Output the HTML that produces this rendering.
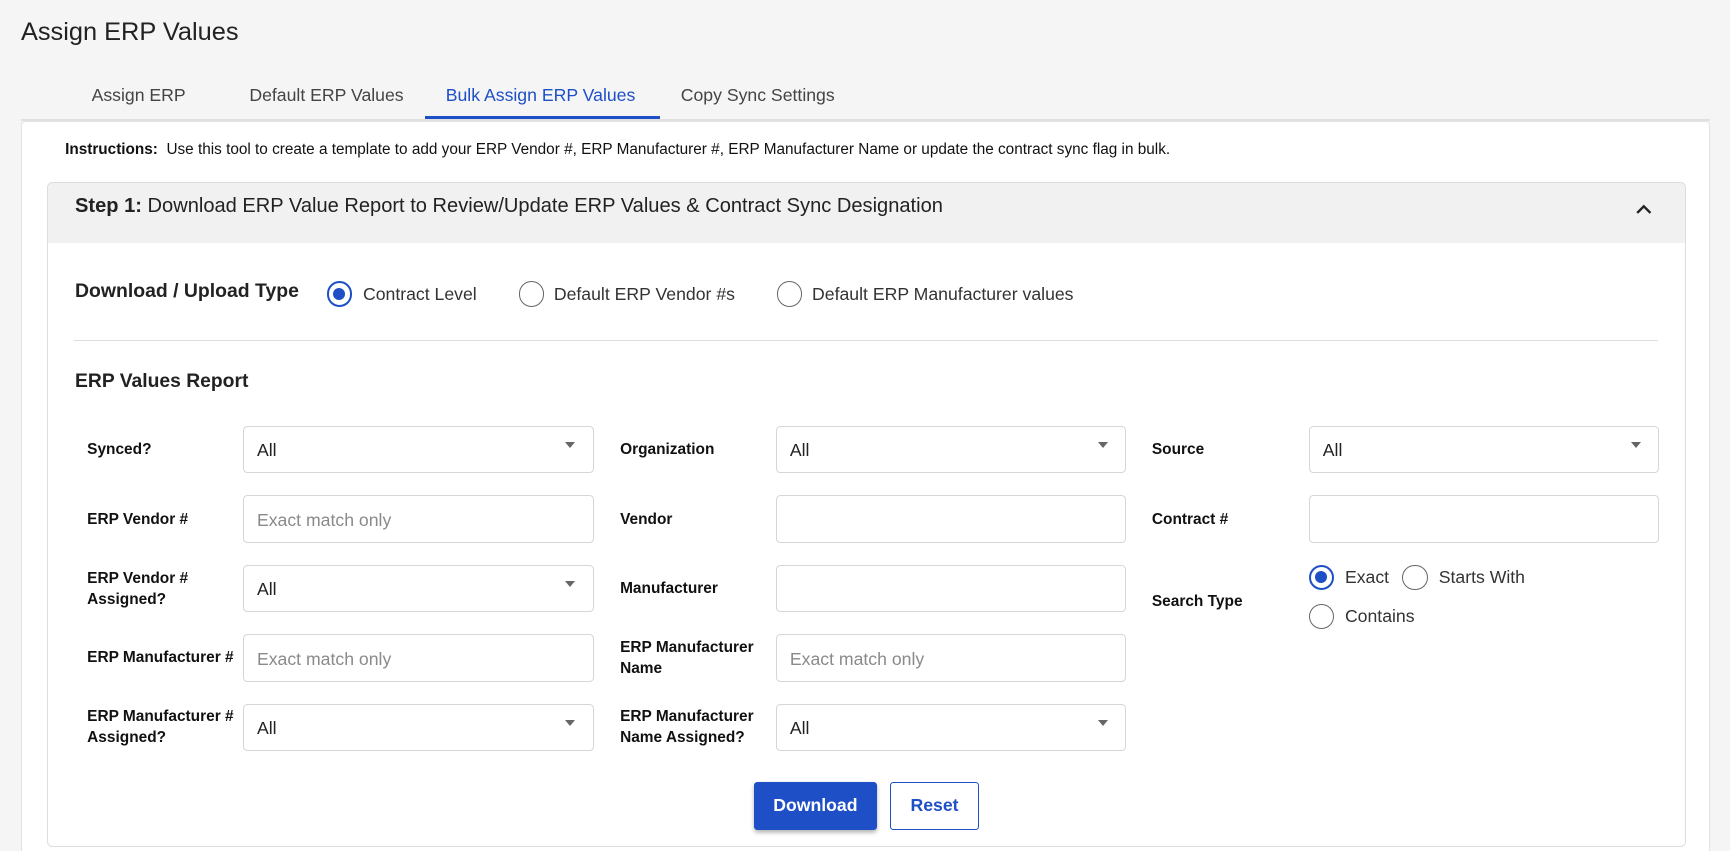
<!DOCTYPE html>
<html><head><meta charset="utf-8"><style>
*{box-sizing:border-box;margin:0;padding:0}
html,body{width:1730px;height:851px;overflow:hidden;background:#f5f5f5}
#root{zoom:1.10332;position:relative;width:1568px;height:771px;overflow:hidden;font-family:"Liberation Sans",Arial,sans-serif;color:#222}
.a{position:absolute;white-space:nowrap}
.title{left:19px;top:16px;font-size:23px;color:#222}
.tab{top:77px;font-size:16px;color:#444}
.card{left:19px;top:110px;width:1531px;height:680px;background:#fff;border:1px solid #e2e2e2;border-radius:4px}
.panel{left:43px;top:165px;width:1485px;height:603px;border:1px solid #ddd;border-radius:5px;background:#fff;overflow:hidden}
.ph{position:absolute;left:0;top:0;right:0;height:54px;background:#f1f1f1}
.lbl{font-size:14px;font-weight:bold;color:#111;line-height:19px}
.inp{position:absolute;width:318px;height:43px;border:1px solid #d6d6d6;border-radius:4px;background:#fff;font-size:16px;color:#222;padding:12px 12px}
.ph2{color:#8a8a8a}
.car{position:absolute;right:16px;top:14px;width:0;height:0;border-left:5px solid transparent;border-right:5px solid transparent;border-top:6px solid #666}
.rad{position:absolute;width:23px;height:23px;border:1.5px solid #666;border-radius:50%;background:#fff}
.rad.on{border:2px solid #1e4fc7}
.rad.on:after{content:"";position:absolute;left:4px;top:4px;width:11px;height:11px;border-radius:50%;background:#1e4fc7}
.rt{font-size:16px;color:#333}
</style></head><body><div id="root">
<div class="a title">Assign ERP Values</div>
<div class="a tab" style="left:83px">Assign ERP</div>
<div class="a tab" style="left:226px">Default ERP Values</div>
<div class="a tab" style="left:404px;color:#1e4fc7;font-weight:500">Bulk Assign ERP Values</div>
<div class="a tab" style="left:617px">Copy Sync Settings</div>
<div class="a card"></div>
<div class="a" style="left:19px;top:108px;width:1531px;height:2px;background:#e0e0e0"></div>
<div class="a" style="left:385px;top:105px;width:213px;height:3px;background:#1e4fc7"></div>
<div class="a" style="left:59px;top:128px;font-size:13.9px;color:#111"><b>Instructions:</b>&nbsp; Use this tool to create a template to add your ERP Vendor #, ERP Manufacturer #, ERP Manufacturer Name or update the contract sync flag in bulk.</div>
<div class="a panel"><div class="ph"></div>
<svg style="position:absolute;left:1438px;top:18px" width="16" height="12" viewBox="0 0 16 12"><path d="M2 9 L8 3 L14 9" fill="none" stroke="#222" stroke-width="2.2"/></svg></div>
<div class="a" style="left:68px;top:177px;font-size:18.2px;color:#222"><b>Step 1:</b> Download ERP Value Report to Review/Update ERP Values &amp; Contract Sync Designation</div>
<div class="a" style="left:68px;top:254px;font-size:17.6px;font-weight:bold;color:#222">Download / Upload Type</div>
<div class="rad on" style="left:296px;top:255px"></div><div class="a rt" style="left:329px;top:257px">Contract Level</div>
<div class="rad" style="left:470px;top:255px"></div><div class="a rt" style="left:502px;top:257px">Default ERP Vendor #s</div>
<div class="rad" style="left:704px;top:255px"></div><div class="a rt" style="left:736px;top:257px">Default ERP Manufacturer values</div>
<div class="a" style="left:67px;top:308px;width:1436px;height:1px;background:#ddd"></div>
<div class="a" style="left:68px;top:336px;font-size:17.5px;font-weight:bold;color:#222">ERP Values Report</div>

<div class="a lbl" style="left:79px;top:399px">Synced?</div>
<div class="inp" style="left:220px;top:386px">All<div class="car"></div></div>
<div class="a lbl" style="left:562px;top:399px">Organization</div>
<div class="inp" style="left:703px;top:386px">All<div class="car"></div></div>
<div class="a lbl" style="left:1044px;top:399px">Source</div>
<div class="inp" style="left:1186px;top:386px">All<div class="car"></div></div>

<div class="a lbl" style="left:79px;top:462px">ERP Vendor #</div>
<div class="inp ph2" style="left:220px;top:449px">Exact match only</div>
<div class="a lbl" style="left:562px;top:462px">Vendor</div>
<div class="inp" style="left:703px;top:449px"></div>
<div class="a lbl" style="left:1044px;top:462px">Contract #</div>
<div class="inp" style="left:1186px;top:449px"></div>

<div class="a lbl" style="left:79px;top:516px">ERP Vendor #<br>Assigned?</div>
<div class="inp" style="left:220px;top:512px">All<div class="car"></div></div>
<div class="a lbl" style="left:562px;top:525px">Manufacturer</div>
<div class="inp" style="left:703px;top:512px"></div>
<div class="a lbl" style="left:1044px;top:537px">Search Type</div>
<div class="rad on" style="left:1186px;top:512px"></div><div class="a rt" style="left:1219px;top:514px">Exact</div>
<div class="rad" style="left:1271px;top:512px"></div><div class="a rt" style="left:1304px;top:514px">Starts With</div>
<div class="rad" style="left:1186px;top:547px"></div><div class="a rt" style="left:1219px;top:549px">Contains</div>

<div class="a lbl" style="left:79px;top:587px">ERP Manufacturer #</div>
<div class="inp ph2" style="left:220px;top:575px">Exact match only</div>
<div class="a lbl" style="left:562px;top:578px">ERP Manufacturer<br>Name</div>
<div class="inp ph2" style="left:703px;top:575px">Exact match only</div>

<div class="a lbl" style="left:79px;top:641px">ERP Manufacturer #<br>Assigned?</div>
<div class="inp" style="left:220px;top:638px">All<div class="car"></div></div>
<div class="a lbl" style="left:562px;top:641px">ERP Manufacturer<br>Name Assigned?</div>
<div class="inp" style="left:703px;top:638px">All<div class="car"></div></div>

<div class="a" style="left:683px;top:709px;width:112px;height:43px;background:#1e4fc7;border-radius:3px;box-shadow:0 2px 4px rgba(0,0,0,.3);color:#fff;font-size:16px;font-weight:bold;text-align:center;line-height:43px">Download</div>
<div class="a" style="left:807px;top:709px;width:80px;height:43px;background:#fff;border:1px solid #1e4fc7;border-radius:3px;color:#1e4fc7;font-size:16px;font-weight:bold;text-align:center;line-height:41px">Reset</div>
</div></body></html>
